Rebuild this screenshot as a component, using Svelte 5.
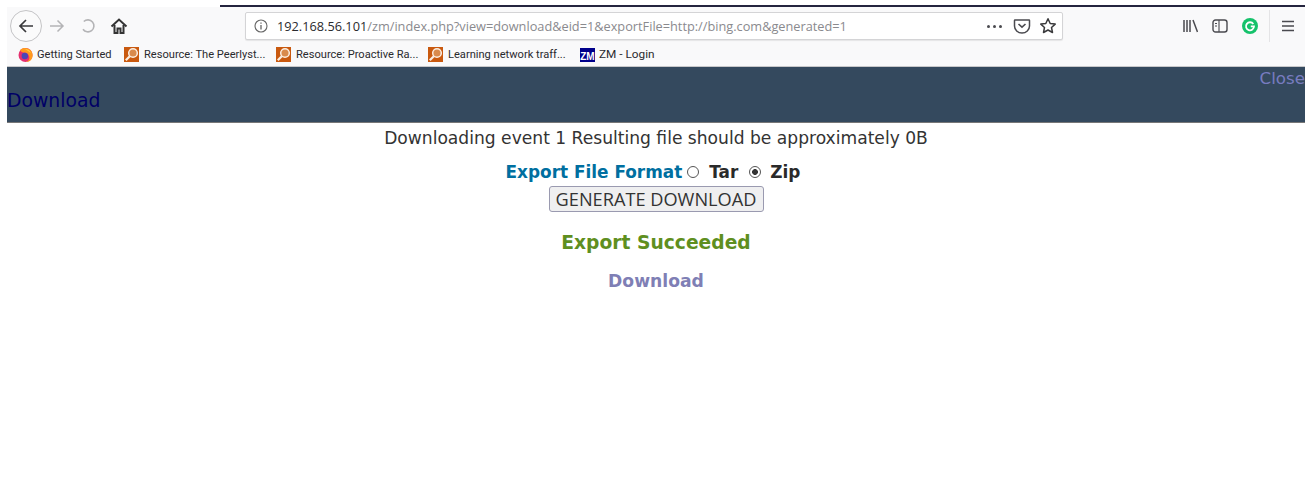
<script>
  let bookmarks = [
    { label: "Resource: The Peerlyst...", width: 152 },
    { label: "Resource: Proactive Ra...", width: 152 },
    { label: "Learning network traff...", width: 152 },
  ];
  let format = "zip";
</script>

<div class="shot">
  <div class="tabline"></div>
  <div class="browser">
    <div class="toolbar">
      <div class="nav">
        <button class="back" aria-label="Back">
          <svg width="18" height="18" viewBox="0 0 18 18"><path d="M16 9H3M9 3L3 9l6 6" fill="none" stroke="#3a3a3c" stroke-width="1.7"/></svg>
        </button>
        <svg class="fwd" width="18" height="18" viewBox="0 0 18 18"><path d="M2 9h13M9.5 3.500L15 9l-5.500 5.500" fill="none" stroke="#b4b4b6" stroke-width="1.5"/></svg>
        <svg class="reload" width="16" height="16" viewBox="0 0 16 16"><path d="M3.800 3.500A6 6 0 1 1 3 11.300" fill="none" stroke="#b4b4b6" stroke-width="1.6"/></svg>
        <svg class="home" width="18" height="18" viewBox="0 0 18 18"><path d="M1.500 9.500L9 2.500l7.500 7" fill="none" stroke="#333" stroke-width="2"/><path d="M4.500 8v8h3V11.500h3V16h3V8" fill="none" stroke="#333" stroke-width="2"/></svg>
      </div>
      <div class="urlbar">
        <svg class="info" width="14" height="14" viewBox="0 0 14 14"><circle cx="7" cy="7" r="6" fill="none" stroke="#666" stroke-width="1.1"/><path d="M7 6v4.500M7 3.500v1.300" stroke="#666" stroke-width="1.3"/></svg>
        <span class="url"><span class="host">192.168.56.101</span>/zm/index.php?view=download&amp;eid=1&amp;exportFile=http://bing.com&amp;generated=1</span>
        <span class="dots"><i></i><i></i><i></i></span>
        <svg class="pocket" width="18" height="18" viewBox="0 0 18 18"><path d="M2 3h14a.5.5 0 0 1 .5.5V9a7.500 7 0 0 1-15 0V3.500A.5.5 0 0 1 2 3z" fill="none" stroke="#4a4a4f" stroke-width="1.5" stroke-linejoin="round"/><path d="M5.500 7l3.500 3.200L12.500 7" fill="none" stroke="#4a4a4f" stroke-width="1.6"/></svg>
        <svg class="star" width="18" height="18" viewBox="0 0 18 18"><path d="M9 1.800l2.200 4.700 5 .6-3.700 3.400 1 5L9 13l-4.500 2.500 1-5L1.800 7.100l5-.6z" fill="none" stroke="#3a3a3c" stroke-width="1.5" stroke-linejoin="round"/></svg>
      </div>
      <div class="tools">
        <svg width="15" height="14" viewBox="0 0 15 14"><path d="M1 1v12M4 1v12M7 1v12M10 1l4.500 12" fill="none" stroke="#4a4a4f" stroke-width="1.5"/></svg>
        <svg width="16" height="14" viewBox="0 0 16 14"><rect x="1" y="1" width="14" height="12" rx="2.500" fill="none" stroke="#4a4a4f" stroke-width="1.4"/><path d="M7 1v12M3 4.500h2M3 7h2" stroke="#4a4a4f" stroke-width="1.1"/></svg>
        <svg width="16" height="16" viewBox="0 0 16 16"><circle cx="8" cy="8" r="8" fill="#15c26b"/><path d="M11.300 6A4 4 0 1 0 12 8.300H8.800" fill="none" stroke="#fff" stroke-width="1.8"/></svg>
        <span class="sep"></span>
        <svg class="menu" width="12" height="12" viewBox="0 0 12 12"><path d="M0 1.500h12M0 6h12M0 10.500h12" stroke="#4a4a4f" stroke-width="1.5"/></svg>
      </div>
    </div>
    <div class="bookmarks">
      <span class="mark first">
        <svg width="15" height="15" viewBox="0 0 15 15"><circle cx="7.500" cy="8" r="7" fill="#e5306f"/><path d="M2 3C4.500 0 10 .5 12.500 3 15 5.500 15.500 10 13 13 11.500 14.500 9.500 15 8 15 11 14 12 11.500 11 9 10 6.500 8 5 5.500 5.500 4 5.500 2.500 4.500 2 3z" fill="#ff9a1f"/><path d="M7 2c2.500 0 5 1.500 6 4-2-1.500-4-2.500-6-4z" fill="#ffd23a"/><circle cx="6.800" cy="9" r="3.200" fill="#4a46b8"/></svg>
        Getting Started
      </span>
      {#each bookmarks as b}
        <span class="mark" style="width: {b.width}px">
          <svg width="15" height="15" viewBox="0 0 15 15"><rect width="15" height="15" fill="#c9590f"/><circle cx="9" cy="6" r="4.300" fill="#d98a4c" stroke="#fbeee2" stroke-width="1.5"/><path d="M5.800 9.200l-4 4" stroke="#fbeee2" stroke-width="2.200"/></svg>
          {b.label}
        </span>
      {/each}
      <span class="mark login">
        <span class="zm">ZM</span>
        ZM - Login
      </span>
    </div>
  </div>

  <div class="header">
    <a class="close" href="#close">Close</a>
    <h2><a href="#download">Download</a></h2>
  </div>

  <div class="content">
    <p class="info-line">Downloading event 1 Resulting file should be approximately 0B</p>
    <div class="format">
      <span class="label">Export File Format</span>
      <span class="radio"></span>
      <span class="opt">Tar</span>
      <span class="radio" class:on={format === "zip"}></span>
      <span class="opt">Zip</span>
    </div>
    <button class="generate">GENERATE DOWNLOAD</button>
    <h3>Export Succeeded</h3>
    <a class="dl" href="#dl">Download</a>
  </div>
</div>

<style>
  :global(body) {
    margin: 0;
    background: #fff;
  }
  .shot {
    width: 1298px;
    margin: 0 7px;
    height: 487px;
    overflow: hidden;
    padding-top: 5px;
    box-sizing: border-box;
  }
  .tabline {
    height: 2px;
    margin-left: 213px;
    background: #24243e;
  }
  .browser {
    background: #f9f9fa;
    height: 59px;
    border-bottom: 1px solid #c8c8ca;
    font-family: "Open Sans", "Noto Sans", sans-serif;
  }
  .toolbar {
    display: flex;
    align-items: center;
    height: 36px;
    padding-top: 2px;
    box-sizing: border-box;
  }
  .nav {
    display: flex;
    align-items: center;
    width: 238px;
    padding-left: 3px;
    box-sizing: border-box;
  }
  .back {
    width: 32px;
    height: 32px;
    border: 1px solid #c4c4c6;
    border-radius: 50%;
    background: #fbfbfb;
    padding: 0;
    display: flex;
    align-items: center;
    justify-content: center;
  }
  .fwd {
    margin-left: 6px;
  }
  .reload {
    margin-left: 14px;
  }
  .home {
    margin-left: 14px;
  }
  .urlbar {
    width: 818px;
    height: 28px;
    box-sizing: border-box;
    background: #fff;
    border: 1px solid #d4d4d6;
    border-radius: 2px;
    display: flex;
    align-items: center;
    padding: 0 5px 0 8px;
    box-shadow: 0 1px 1px rgba(0, 0, 0, 0.08);
  }
  .url {
    flex: 1;
    font-size: 12.75px;
    color: #8a8a8e;
    margin-left: 9px;
    white-space: nowrap;
  }
  .host {
    color: #2a2a2e;
  }
  .dots {
    display: flex;
    gap: 3px;
    margin-right: 11px;
  }
  .dots i {
    width: 3px;
    height: 3px;
    border-radius: 50%;
    background: #4a4a4f;
  }
  .pocket {
    margin-right: 8px;
  }
  .tools {
    flex: 1;
    display: flex;
    align-items: center;
    gap: 14px;
    padding-left: 120px;
  }
  .sep {
    width: 1px;
    height: 32px;
    background: #e4e4e6;
    margin-left: -3px;
  }
  .menu {
    margin-left: -2px;
  }
  .bookmarks {
    display: flex;
    align-items: center;
    height: 23px;
    padding-left: 11px;
    font-size: 11.1px;
    font-family: Roboto, "Open Sans", sans-serif;
    color: #2a2a2e;
    line-height: 17px;
  }
  .mark {
    display: flex;
    align-items: center;
    gap: 5px;
    white-space: nowrap;
  }
  .mark.first {
    width: 106px;
    gap: 4px;
  }
  .mark.login {
    font-size: 11.8px;
    gap: 4px;
  }
  .zm {
    width: 15px;
    height: 14px;
    background: #00008b;
    color: #fff;
    font: bold 10px/17px "Liberation Sans", sans-serif;
    text-align: center;
    overflow: hidden;
  }
  .header {
    background: #34495e;
    height: 55px;
    border-bottom: 1px solid #777;
    font-family: "DejaVu Sans", Verdana, sans-serif;
    overflow: hidden;
  }
  .close {
    float: right;
    color: #787cc0;
    font-size: 16.7px;
    text-decoration: none;
    margin-top: 1px;
  }
  h2 {
    margin: 23px 0 0;
    font-size: 18.8px;
    font-weight: normal;
    line-height: 22px;
  }
  h2 a {
    color: #000066;
    text-decoration: none;
  }
  .content {
    text-align: center;
    font-family: "DejaVu Sans", Verdana, sans-serif;
    color: #333;
  }
  .info-line {
    margin: 5px 0 0;
    font-size: 17.13px;
    line-height: 20px;
  }
  .format {
    margin-top: 14px;
    padding-right: 6px;
    display: flex;
    justify-content: center;
    align-items: center;
    height: 19px;
    font-weight: bold;
    font-size: 16.9px;
  }
  .label {
    color: #006fa0;
  }
  .opt {
    color: #2a2a2a;
  }
  .radio {
    width: 12px;
    height: 12px;
    box-sizing: border-box;
    border: 1px solid #555;
    border-radius: 50%;
    margin: 0 10px 0 5px;
    background: #fff;
  }
  .opt + .radio {
    margin: 0 9px 0 11px;
  }
  .radio.on {
    background: radial-gradient(circle, #333 0 2.6px, #fff 3.2px);
  }
  .generate {
    display: block;
    margin: 5px auto 0;
    width: 215px;
    height: 26px;
    padding: 0;
    font: 18.2px "Open Sans", "Liberation Sans", sans-serif;
    color: #333;
    background: #efeff0;
    border: 1px solid #9a9ab0;
    border-radius: 3px;
  }
  h3 {
    margin: 19px 0 0;
    font-size: 18.7px;
    line-height: 24px;
    color: #5f8f1f;
  }
  .dl {
    display: block;
    margin-top: 16px;
    font-size: 17.2px;
    line-height: 20px;
    font-weight: bold;
    color: #7f7fb5;
    text-decoration: none;
  }
</style>
